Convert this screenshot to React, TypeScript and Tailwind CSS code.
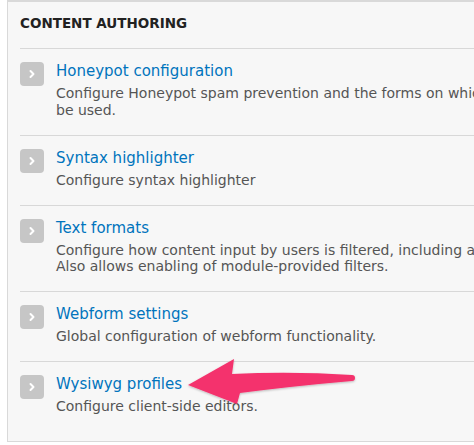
import React from 'react';

interface AdminItem {
  title: string;
  lines: string[];
}

const items: AdminItem[] = [
  {
    title: 'Honeypot configuration',
    lines: ['Configure Honeypot spam prevention and the forms on which it must', 'be used.'],
  },
  {
    title: 'Syntax highlighter',
    lines: ['Configure syntax highlighter'],
  },
  {
    title: 'Text formats',
    lines: [
      'Configure how content input by users is filtered, including allowed HTML tags.',
      'Also allows enabling of module-provided filters.',
    ],
  },
  {
    title: 'Webform settings',
    lines: ['Global configuration of webform functionality.'],
  },
  {
    title: 'Wysiwyg profiles',
    lines: ['Configure client-side editors.'],
  },
];

const ChevronBox: React.FC = () => (
  <div className="mt-[2px] w-[24px] h-[24px] shrink-0 rounded-[4px] bg-[#c6c6c6] flex items-center justify-center">
    <svg width="8" height="10" viewBox="0 0 8 10" fill="none">
      <path d="M2.5 2 L5.5 5 L2.5 8" stroke="#ffffff" strokeWidth="2" strokeLinecap="round" strokeLinejoin="round" />
    </svg>
  </div>
);

const App: React.FC = () => {
  return (
    <div className="relative w-[474px] h-[445px] overflow-hidden bg-white font-['DejaVu_Sans','Liberation_Sans',sans-serif]">
      {/* Block panel, wider than the window so long descriptions run off the edge */}
      <div className="ml-[7px] w-[620px] bg-[#f7f7f7] border-t-2 border-l border-b border-[#d9d9d9] pl-[12px] pt-[11px] pb-[10px]">
        <h2 className="text-[13.5px] leading-[20px] font-bold text-[#222] pb-[15px]">CONTENT AUTHORING</h2>
        <ul>
          {items.map((item) => (
            <li
              key={item.title}
              className="flex items-start gap-[12px] border-t border-[#d8d8d8] pt-[11px] pb-[16.5px]"
            >
              <ChevronBox />
              <div>
                <a className="block text-[15px] leading-[22px] text-[#0074bd]">{item.title}</a>
                <div className="mt-[3px] text-[14px] leading-[16.5px] text-[#555]">
                  {item.lines.map((line) => (
                    <span key={line} className="block whitespace-nowrap">
                      {line}
                    </span>
                  ))}
                </div>
              </div>
            </li>
          ))}
        </ul>
      </div>

      {/* Annotation arrow */}
      <svg
        className="absolute left-0 top-0 pointer-events-none"
        width="474"
        height="445"
        viewBox="0 0 474 445"
      >
        <defs>
          <filter id="arrowShadow" x="-10%" y="-30%" width="120%" height="160%">
            <feDropShadow dx="0" dy="1" stdDeviation="1" floodColor="#000" floodOpacity="0.25" />
          </filter>
        </defs>
        <path
          d="M188 385 L234 359 L232 374 Q292 371 352 375 A3 3 0 0 1 352 381 Q294 386 240 393 L237 404 Z"
          fill="#f4336d"
          filter="url(#arrowShadow)"
        />
      </svg>
    </div>
  );
};

export default App;
